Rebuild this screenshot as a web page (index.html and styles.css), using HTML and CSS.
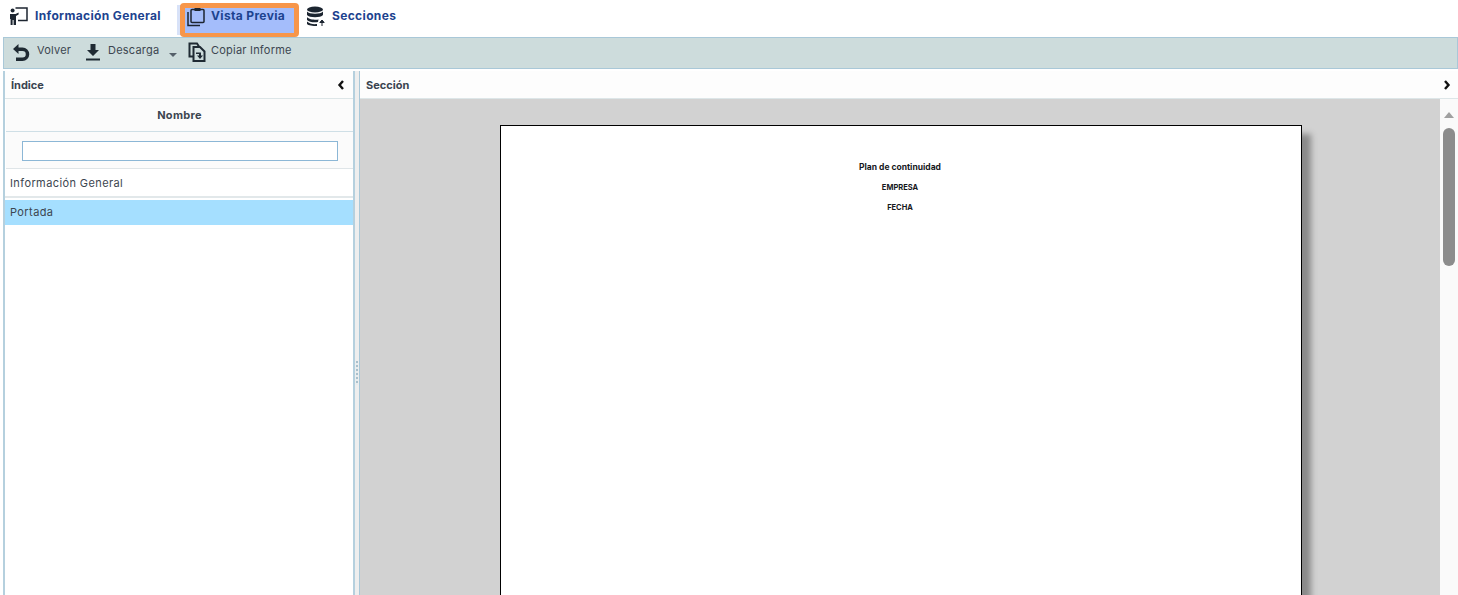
FILE: index.html
```html
<!DOCTYPE html>
<html lang="es">
<head>
<meta charset="utf-8">
<title>Vista Previa</title>
<link rel="stylesheet" href="styles.css">
</head>
<body>
<nav class="tabs">
  <a class="tab tab-info">
    <svg class="tab-icon" viewBox="0 0 20 20" width="20" height="20"><circle cx="3.600" cy="4.600" r="2" fill="#1c2530"/><path d="M1 8h5.600l3-1.600v2L7 10v9H4.600v-5H3.600v5H1.600v-6H1z" fill="#1c2530"/><path d="M6.500 2h11.500v12.500h-9" fill="none" stroke="#1c2530" stroke-width="1.500"/></svg>
    <span>Información General</span>
  </a>
  <a class="tab tab-active">
    <svg class="tab-icon" viewBox="0 0 20 20" width="20" height="20"><path d="M2 5v13.500h12" fill="none" stroke="#1c2530" stroke-width="1.500"/><rect x="5" y="2.500" width="13" height="13" rx="1" fill="none" stroke="#1c2530" stroke-width="1.500"/><rect x="8.500" y="1" width="6" height="3" fill="#1c2530"/></svg>
    <span>Vista Previa</span>
    <i class="highlight"></i>
  </a>
  <a class="tab tab-sections">
    <svg class="tab-icon" viewBox="0 0 20 20" width="20" height="20"><ellipse cx="9" cy="3.500" rx="8" ry="3" fill="#1c2530"/><path d="M1 5.500c2 3 14 3 16 0V9c-2 3-14 3-16 0zM1 11c2 3 10 3 11.500 2.500L12 16c-4 .8-9 0-11-2zM1 15.500c2 2 6 3 10 2.500v2c-4 0-9-.5-10-2z" fill="#1c2530"/><path d="M16 20v-5M13.800 16.500l2.200-2.500 2.200 2.500z" fill="#1c2530" stroke="#1c2530"/></svg>
    <span>Secciones</span>
  </a>
</nav>

<div class="toolbar">
  <button class="tool tool-back">
    <svg viewBox="0 0 18 18" width="18" height="18"><path d="M6.500 1 1 6l5.500 5V8h4a3.200 3.200 0 0 1 0 6.500H4V18h6.500a6.700 6.700 0 0 0 0-13.500h-4z" fill="#1f2a33"/></svg>
    <span>Volver</span>
  </button>
  <button class="tool tool-down">
    <svg viewBox="0 0 16 18" width="16" height="18"><path d="M5.500 1h5v6h3.500L8 13 2 7h3.500zM1 15.500h14V17.500H1z" fill="#1f2a33"/></svg>
    <span>Descarga</span>
    <i class="caret"></i>
  </button>
  <button class="tool tool-copy">
    <svg viewBox="0 0 18 20" width="18" height="20"><path d="M5 14.500H1.500V1.500H9L11 4.500" fill="none" stroke="#1f2a33" stroke-width="2"/><path d="M5.500 5h6.500l4.500 4.500V19H5.500z" fill="none" stroke="#1f2a33" stroke-width="2"/><path d="M8 10.500h5v3h2l-3 3.500-3-3.500h2v-1.500H8z" fill="#1f2a33"/></svg>
    <span>Copiar Informe</span>
  </button>
</div>

<main class="workspace">
  <section class="index-panel">
    <header class="panel-head">
      <span>Índice</span>
      <svg class="chev" viewBox="0 0 8 10" width="8" height="10"><path d="M6 1 2.500 5 6 9" fill="none" stroke="#111" stroke-width="2.400"/></svg>
    </header>
    <div class="grid-head">Nombre</div>
    <div class="grid-filter"><input class="filter-input" type="text"></div>
    <div class="row">Información General</div>
    <div class="row row-selected">Portada</div>
  </section>

  <div class="splitter"><i class="grip"></i></div>

  <section class="section-panel">
    <header class="panel-head panel-head-right">
      <span>Sección</span>
      <svg class="chev" viewBox="0 0 8 10" width="8" height="10"><path d="M2 1l3.500 4L2 9" fill="none" stroke="#111" stroke-width="2.400"/></svg>
    </header>
    <div class="preview">
      <div class="canvas">
        <article class="sheet">
          <p class="sheet-title">Plan de continuidad</p>
          <p>EMPRESA</p>
          <p>FECHA</p>
        </article>
      </div>
      <div class="scrollbar">
        <i class="arrow"></i>
        <i class="thumb"></i>
      </div>
    </div>
  </section>
</main>
</body>
</html>
```
FILE: styles.css
```css
* { box-sizing: border-box; }
html, body { margin: 0; height: 595px; overflow: hidden; background: #fff; }
body { font-family: "Inter", "Noto Sans", "Liberation Sans", sans-serif; color: #3c4650; }

.tabs { height: 37px; display: flex; align-items: stretch; padding-left: 9px; }
.tab { display: flex; align-items: center; gap: 6px; font-size: 12px; font-weight: 700; letter-spacing: .35px; color: #1d438f; white-space: nowrap; }
.tab-icon { flex: none; margin-top: 2px; }
.tab-info { width: 168px; margin-bottom: 7px; }
.tab-active { position: relative; width: 120px; margin: 5px 0 2px; padding: 0 0 10px 6px; gap: 5px; background: #a4bdfb; border-left: 3px solid #d8e2f8; color: #1d438f; }
.tab-active .tab-icon { margin-top: 4px; }
.tab-sections { margin-left: 9px; gap: 6px; margin-bottom: 7px; }
.highlight { position: absolute; left: 0; top: -2px; width: 119px; height: 34px; border: solid #f7964a; border-width: 5px 5px 4px; border-radius: 4px; }

.toolbar { height: 32px; margin-left: 3px; display: flex; align-items: center; padding-left: 8px; background: #cddcdc; border: 1px solid #a9c8d8; }
.tool { display: flex; align-items: center; margin-bottom: 2px; padding: 0; border: 0; background: none; font: inherit; font-size: 11px; letter-spacing: .22px; color: #3c4650; }
.tool span { margin-bottom: 4px; }
.tool-back { gap: 7px; width: 73px; }
.tool-down { gap: 7px; width: 103px; }
.tool-copy { gap: 5px; }
.caret { width: 0; height: 0; margin: 5px 0 0 3px; border: 4px solid transparent; border-top-color: #55606a; border-bottom: 0; }

.workspace { display: flex; height: 526px; margin-top: 2px; }
.index-panel { width: 352px; margin-left: 3px; border-left: 2px solid #b5d0de; border-right: 2px solid #b5d0de; background: #fff; }
.panel-head { height: 28px; display: flex; align-items: center; justify-content: space-between; padding: 1px 8px 0 6px; background: #fdfdfd; border-bottom: 1px solid #dde6e8; font-size: 11px; font-weight: 700; color: #3a4450; }
.panel-head-right { padding: 1px 7px 0 6px; }
.chev { flex: none; }
.grid-head { height: 33px; display: flex; align-items: center; justify-content: center; margin-left: 1px; border-bottom: 1px solid #cfdfe6; background: #fbfbfb; font-size: 11px; font-weight: 700; letter-spacing: .3px; }
.grid-filter { height: 37px; display: flex; align-items: center; justify-content: center; margin-left: 1px; padding-top: 2px; background: #fbfbfb; border-bottom: 1px solid #dfe5e8; }
.filter-input { width: 316px; height: 20px; padding: 0; background: #fff; border: 1px solid #8cb7d6; border-radius: 0; }
.row { height: 29px; display: flex; align-items: center; padding-left: 5px; border-bottom: 2px solid #e2e8ea; font-size: 11px; letter-spacing: .4px; }
.row-selected { height: 25px; margin-top: 2px; padding-bottom: 2px; background: #a5dfff; border-bottom: 0; }

.splitter { position: relative; width: 5px; background: #eeeeee; border-right: 1px solid #a9c8d8; }
.grip { position: absolute; left: 1px; top: 290px; width: 2px; height: 24px; background: repeating-linear-gradient(#a9c0cc 0 2px, #e6ecee 2px 4px); }

.section-panel { flex: 1; min-width: 0; display: flex; flex-direction: column; }
.preview { flex: 1; display: flex; min-height: 0; }
.canvas { flex: 1; min-width: 0; overflow: hidden; padding: 26px 0 0 140px; background: #d2d2d2; }
.sheet { width: 802px; height: 700px; padding: 35px 2px 0 0; background: #fff; border: solid #000; border-width: 1.500px; box-shadow: 9px 9px 6px #8a8a8a; text-align: center; font-size: 7.500px; font-weight: 700; color: #16181c; }
.sheet p { height: 12px; line-height: 12px; margin: 0 0 8px; }
.sheet .sheet-title { margin-bottom: 9px; font-size: 8.500px; }
.scrollbar { width: 18px; display: flex; flex-direction: column; align-items: center; background: #fafafa; }
.arrow { width: 0; height: 0; margin-top: 13px; border: 5px solid transparent; border-top: 0; border-bottom: 6px solid #a0a0a0; }
.thumb { width: 12px; height: 138px; margin-top: 10px; border-radius: 6px; background: #8c8c8c; }
```
